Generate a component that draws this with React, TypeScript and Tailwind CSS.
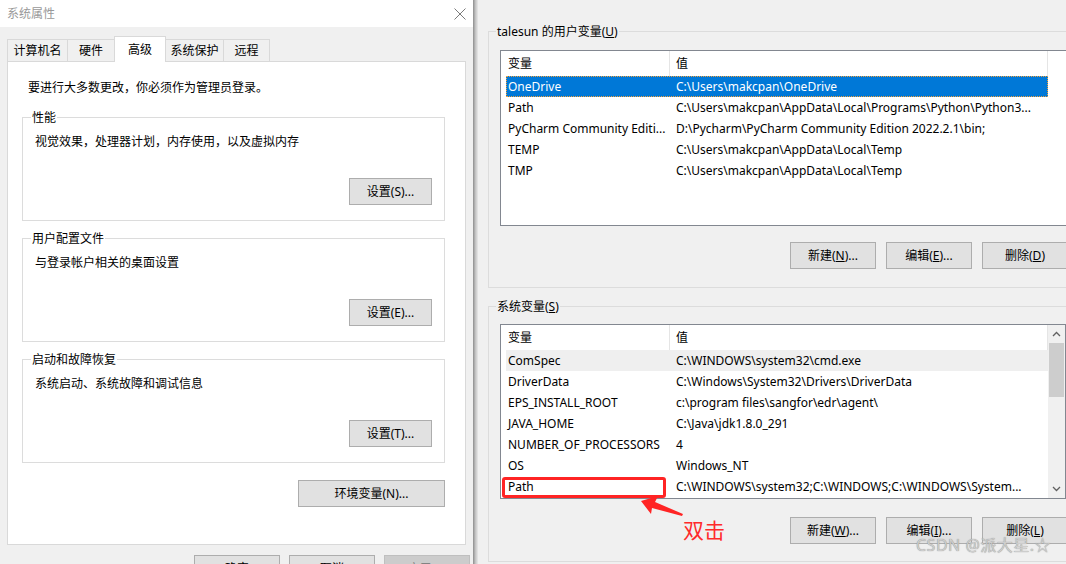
import React from "react";

type Row = [string, string];

const userVars: Row[] = [
  ["OneDrive", "C:\\Users\\makcpan\\OneDrive"],
  ["Path", "C:\\Users\\makcpan\\AppData\\Local\\Programs\\Python\\Python3..."],
  ["PyCharm Community Editi...", "D:\\Pycharm\\PyCharm Community Edition 2022.2.1\\bin;"],
  ["TEMP", "C:\\Users\\makcpan\\AppData\\Local\\Temp"],
  ["TMP", "C:\\Users\\makcpan\\AppData\\Local\\Temp"],
];

const sysVars: Row[] = [
  ["ComSpec", "C:\\WINDOWS\\system32\\cmd.exe"],
  ["DriverData", "C:\\Windows\\System32\\Drivers\\DriverData"],
  ["EPS_INSTALL_ROOT", "c:\\program files\\sangfor\\edr\\agent\\"],
  ["JAVA_HOME", "C:\\Java\\jdk1.8.0_291"],
  ["NUMBER_OF_PROCESSORS", "4"],
  ["OS", "Windows_NT"],
  ["Path", "C:\\WINDOWS\\system32;C:\\WINDOWS;C:\\WINDOWS\\System..."],
];

const Btn = ({ children, w = "w-[83px]", disabled = false }: { children: React.ReactNode; w?: string; disabled?: boolean }) => (
  <div
    className={`${w} h-[27px] shrink-0 flex items-center justify-center border ${
      disabled ? "border-[#bfbfbf] bg-[#cccccc] text-[#838383]" : "border-[#adadad] bg-[#e1e1e1]"
    }`}
  >
    {children}
  </div>
);

const Group = ({ label, desc, btn }: { label: string; desc: string; btn: string }) => (
  <fieldset className="ml-[14px] w-[423px] h-[112px] border border-[#dcdcdc]">
    <legend className="ml-[8px] px-[1px] leading-[17px]">{label}</legend>
    <div className="pl-[12px] pt-[7px] leading-[18px]">{desc}</div>
    <div className="flex justify-end pr-[12px] mt-[27px]">
      <Btn>{btn}</Btn>
    </div>
  </fieldset>
);

const ListView = ({
  rows,
  selected,
  hover,
  scroll,
  h,
  w = "w-[566px]",
}: {
  rows: Row[];
  selected?: number;
  hover?: number;
  scroll?: boolean;
  h: string;
  w?: string;
}) => (
  <div className={`${w} ${h} border border-[#828790] bg-white flex overflow-hidden`}>
    <div className="flex-1 pl-[5px]">
      <div className="h-[25px] flex items-stretch">
        <div className="w-[164px] pl-[2px] flex items-center border-r border-[#e5e5e5]">变量</div>
        <div className="w-[378px] pl-[6px] flex items-center border-r border-[#e5e5e5]">值</div>
      </div>
      {rows.map(([k, v], i) => (
        <div
          key={k + i}
          className={`w-[542px] h-[21px] flex items-center whitespace-nowrap ${
            i === selected
              ? "bg-[#0078d7] text-white outline-1 outline-dotted outline-[#f3a13a] -outline-offset-1"
              : i === hover
              ? "bg-[#efefef]"
              : ""
          }`}
        >
          <div className="w-[164px] pl-[2px] overflow-hidden">{k}</div>
          <div className="w-[378px] pl-[6px] overflow-hidden">{v}</div>
        </div>
      ))}
    </div>
    {scroll && (
      <div className="w-[17px] h-full bg-[#f0f0f0] flex flex-col items-center">
        <div className="h-[18px] w-full flex items-center justify-center">
          <svg width="9" height="6" viewBox="0 0 9 6">
            <path d="M1 5 L4.5 1.5 L8 5" fill="none" stroke="#606060" strokeWidth="1.3" />
          </svg>
        </div>
        <div className="w-[15px] h-[54px] bg-[#cdcdcd]" />
        <div className="flex-1" />
        <div className="h-[18px] w-full flex items-center justify-center">
          <svg width="9" height="6" viewBox="0 0 9 6">
            <path d="M1 1 L4.5 4.5 L8 1" fill="none" stroke="#606060" strokeWidth="1.3" />
          </svg>
        </div>
      </div>
    )}
  </div>
);

export default function App() {
  return (
    <div className="relative w-[1066px] h-[564px] overflow-hidden flex bg-[#f0f0f0] text-[12px] text-black font-['Noto_Sans','Noto_Sans_CJK_SC',sans-serif]">
      {/* 系统属性 dialog */}
      <div className="w-[473px] shrink-0 flex flex-col">
        <div className="h-[27px] shrink-0 bg-white flex items-center justify-between pl-[7px] pr-[7px]">
          <span className="text-[#999999]">系统属性</span>
          <svg width="12" height="12" viewBox="0 0 12 12">
            <path d="M0.5 0.5 L11.5 11.5 M11.5 0.5 L0.5 11.5" stroke="#7a7a7a" strokeWidth="1" />
          </svg>
        </div>
        <div className="shrink-0 px-[7px] pt-[9px]">
          <div className="relative z-10 -mb-px flex items-end h-[26px]">
            <div className="w-[61px] h-[23px] flex items-center justify-center border border-b-0 border-[#d9d9d9]">计算机名</div>
            <div className="-ml-px w-[48px] h-[23px] flex items-center justify-center border border-b-0 border-[#d9d9d9]">硬件</div>
            <div className="-ml-px w-[52px] h-[26px] flex items-center justify-center border border-b-0 border-[#d9d9d9] bg-white">高级</div>
            <div className="-ml-px w-[59px] h-[23px] flex items-center justify-center border border-b-0 border-[#d9d9d9]">系统保护</div>
            <div className="-ml-px w-[47px] h-[23px] flex items-center justify-center border border-b-0 border-[#d9d9d9]">远程</div>
          </div>
          <div className="h-[484px] bg-white border border-[#d9d9d9] pt-[17px]">
            <div className="pl-[20px] leading-[18px]">要进行大多数更改，你必须作为管理员登录。</div>
            <div className="mt-[12px] flex flex-col gap-[9px]">
              <Group label="性能" desc="视觉效果，处理器计划，内存使用，以及虚拟内存" btn="设置(S)..." />
              <Group label="用户配置文件" desc="与登录帐户相关的桌面设置" btn="设置(E)..." />
              <Group label="启动和故障恢复" desc="系统启动、系统故障和调试信息" btn="设置(T)..." />
            </div>
            <div className="ml-[290px] mt-[17px]">
              <Btn w="w-[147px]">环境变量(N)...</Btn>
            </div>
          </div>
          <div className="mt-[10px] ml-[187px] flex gap-[9px]">
            <Btn w="w-[86px]">确定</Btn>
            <Btn w="w-[86px]">取消</Btn>
            <Btn w="w-[86px]" disabled>
              应用(A)
            </Btn>
          </div>
        </div>
      </div>

      {/* window edge shadow */}
      <div className="w-[5px] shrink-0 bg-linear-to-r from-[#8e8e8e] via-[#c4c4c4] to-[#e8e8e8]" />

      {/* 环境变量 dialog */}
      <div className="flex-1 pl-[10px] pt-[23px]">
        <fieldset className="w-[600px] h-[265px] border border-[#dcdcdc]">
          <legend className="ml-[7px] px-[1px] leading-[17px]">
            talesun 的用户变量(<u>U</u>)
          </legend>
          <div className="pl-[11px] pt-[10px]">
            <ListView rows={userVars} selected={0} h="h-[176px]" w="w-[570px]" />
            <div className="w-[568px] mt-[16px] flex justify-end gap-[10px]">
              <Btn w="w-[86px]">
                新建(<u>N</u>)...
              </Btn>
              <Btn w="w-[86px]">
                编辑(<u>E</u>)...
              </Btn>
              <Btn w="w-[86px]">
                删除(<u>D</u>)
              </Btn>
            </div>
          </div>
        </fieldset>
        <fieldset className="mt-[10px] w-[600px] h-[264px] border border-[#dcdcdc]">
          <legend className="ml-[7px] px-[1px] leading-[17px]">
            系统变量(<u>S</u>)
          </legend>
          <div className="pl-[11px] pt-[9px]">
            <ListView rows={sysVars} hover={0} scroll h="h-[175px]" />
            <div className="w-[568px] mt-[18px] flex justify-end gap-[10px]">
              <Btn w="w-[86px]">
                新建(<u>W</u>)...
              </Btn>
              <Btn w="w-[86px]">
                编辑(<u>I</u>)...
              </Btn>
              <Btn w="w-[86px]">
                删除(<u>L</u>)
              </Btn>
            </div>
          </div>
        </fieldset>
      </div>

      {/* annotation overlays */}
      <div className="absolute left-[502px] top-[477px] w-[164px] h-[21px] border-[3px] border-[#ff2424] rounded-[3px]" />
      <svg className="absolute left-[636px] top-[492px]" width="52" height="28" viewBox="636 492 52 28">
        <polygon points="641,501 658,496 655,502 683,514 682,516 652,508 651,514" fill="#ff2424" />
      </svg>
      <div className="absolute left-[683px] top-[516px] text-[21px] leading-[26px] text-[#ff2a2a] font-['Noto_Sans_CJK_SC',sans-serif]">
        双击
      </div>
      <div className="absolute left-[916px] top-[535px] text-[16px] leading-[20px] tracking-[0.5px] text-[#cdcdcd] font-['Noto_Sans','Noto_Sans_CJK_SC',sans-serif] [text-shadow:0_0_1px_#7a7a7a]">
        CSDN @派大星.☆
      </div>
    </div>
  );
}
